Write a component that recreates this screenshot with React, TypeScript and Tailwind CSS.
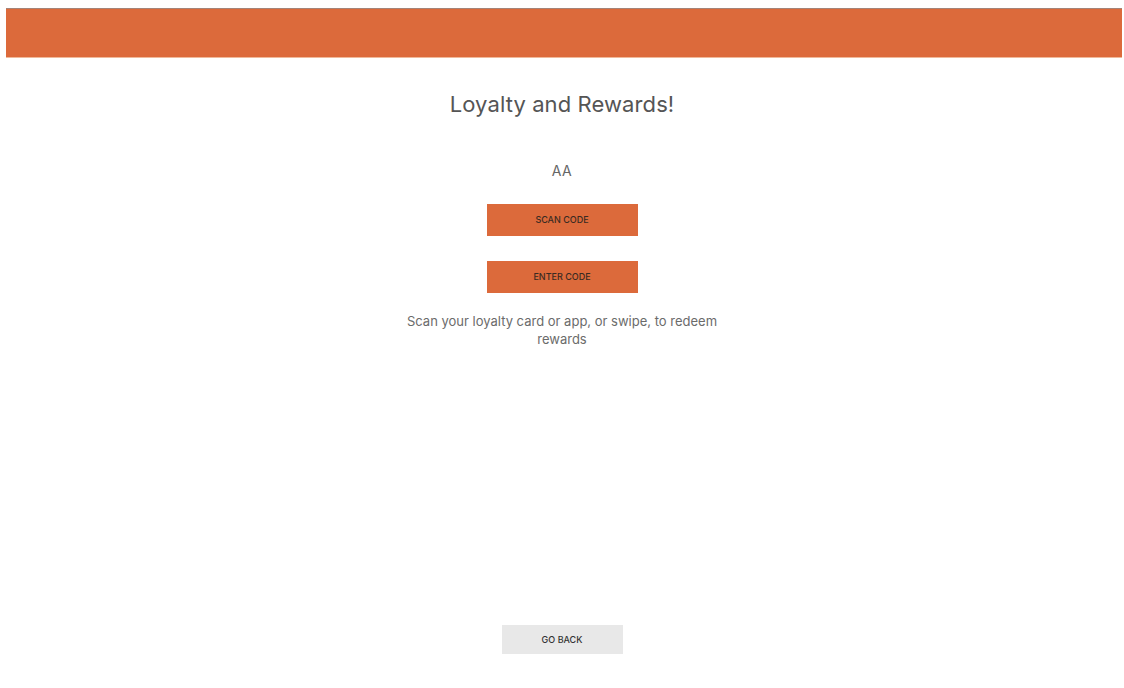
export default function App() {
  return (
    <div className="w-[1124px] h-[688px] bg-white flex flex-col" style={{ fontFamily: '"Inter", "Liberation Sans", sans-serif' }}>
      <div className="mt-[8px] ml-[6px] mr-[2px] h-[50px] bg-[#dc6a3b] border-t border-[#a58377] border-b border-b-[#f0b99a]" />
      <div className="flex flex-col items-center flex-1">
        <h1 className="mt-[32px] text-[22px] leading-[28px] text-[#555555] tracking-[0.1px]">Loyalty and Rewards!</h1>
        <div className="mt-[43px] text-[14px] leading-[20px] text-[#666666] tracking-[0.5px]">AA</div>
        <button className="mt-[23px] w-[151px] h-[32px] bg-[#dc6a3b] text-[9px] font-medium text-[#3a2a22] flex items-center justify-center">SCAN CODE</button>
        <button className="mt-[25px] w-[151px] h-[32px] bg-[#dc6a3b] text-[9px] font-medium text-[#3a2a22] flex items-center justify-center">ENTER CODE</button>
        <p className="mt-[19px] w-[330px] text-center text-[13px] leading-[18px] text-[#6b6b6b]">Scan your loyalty card or app, or swipe, to redeem rewards</p>
        <div className="flex-1" />
        <button className="mb-[34px] w-[121px] h-[29px] bg-[#e8e8e8] text-[9px] font-medium text-[#333333] flex items-center justify-center">GO BACK</button>
      </div>
    </div>
  );
}
